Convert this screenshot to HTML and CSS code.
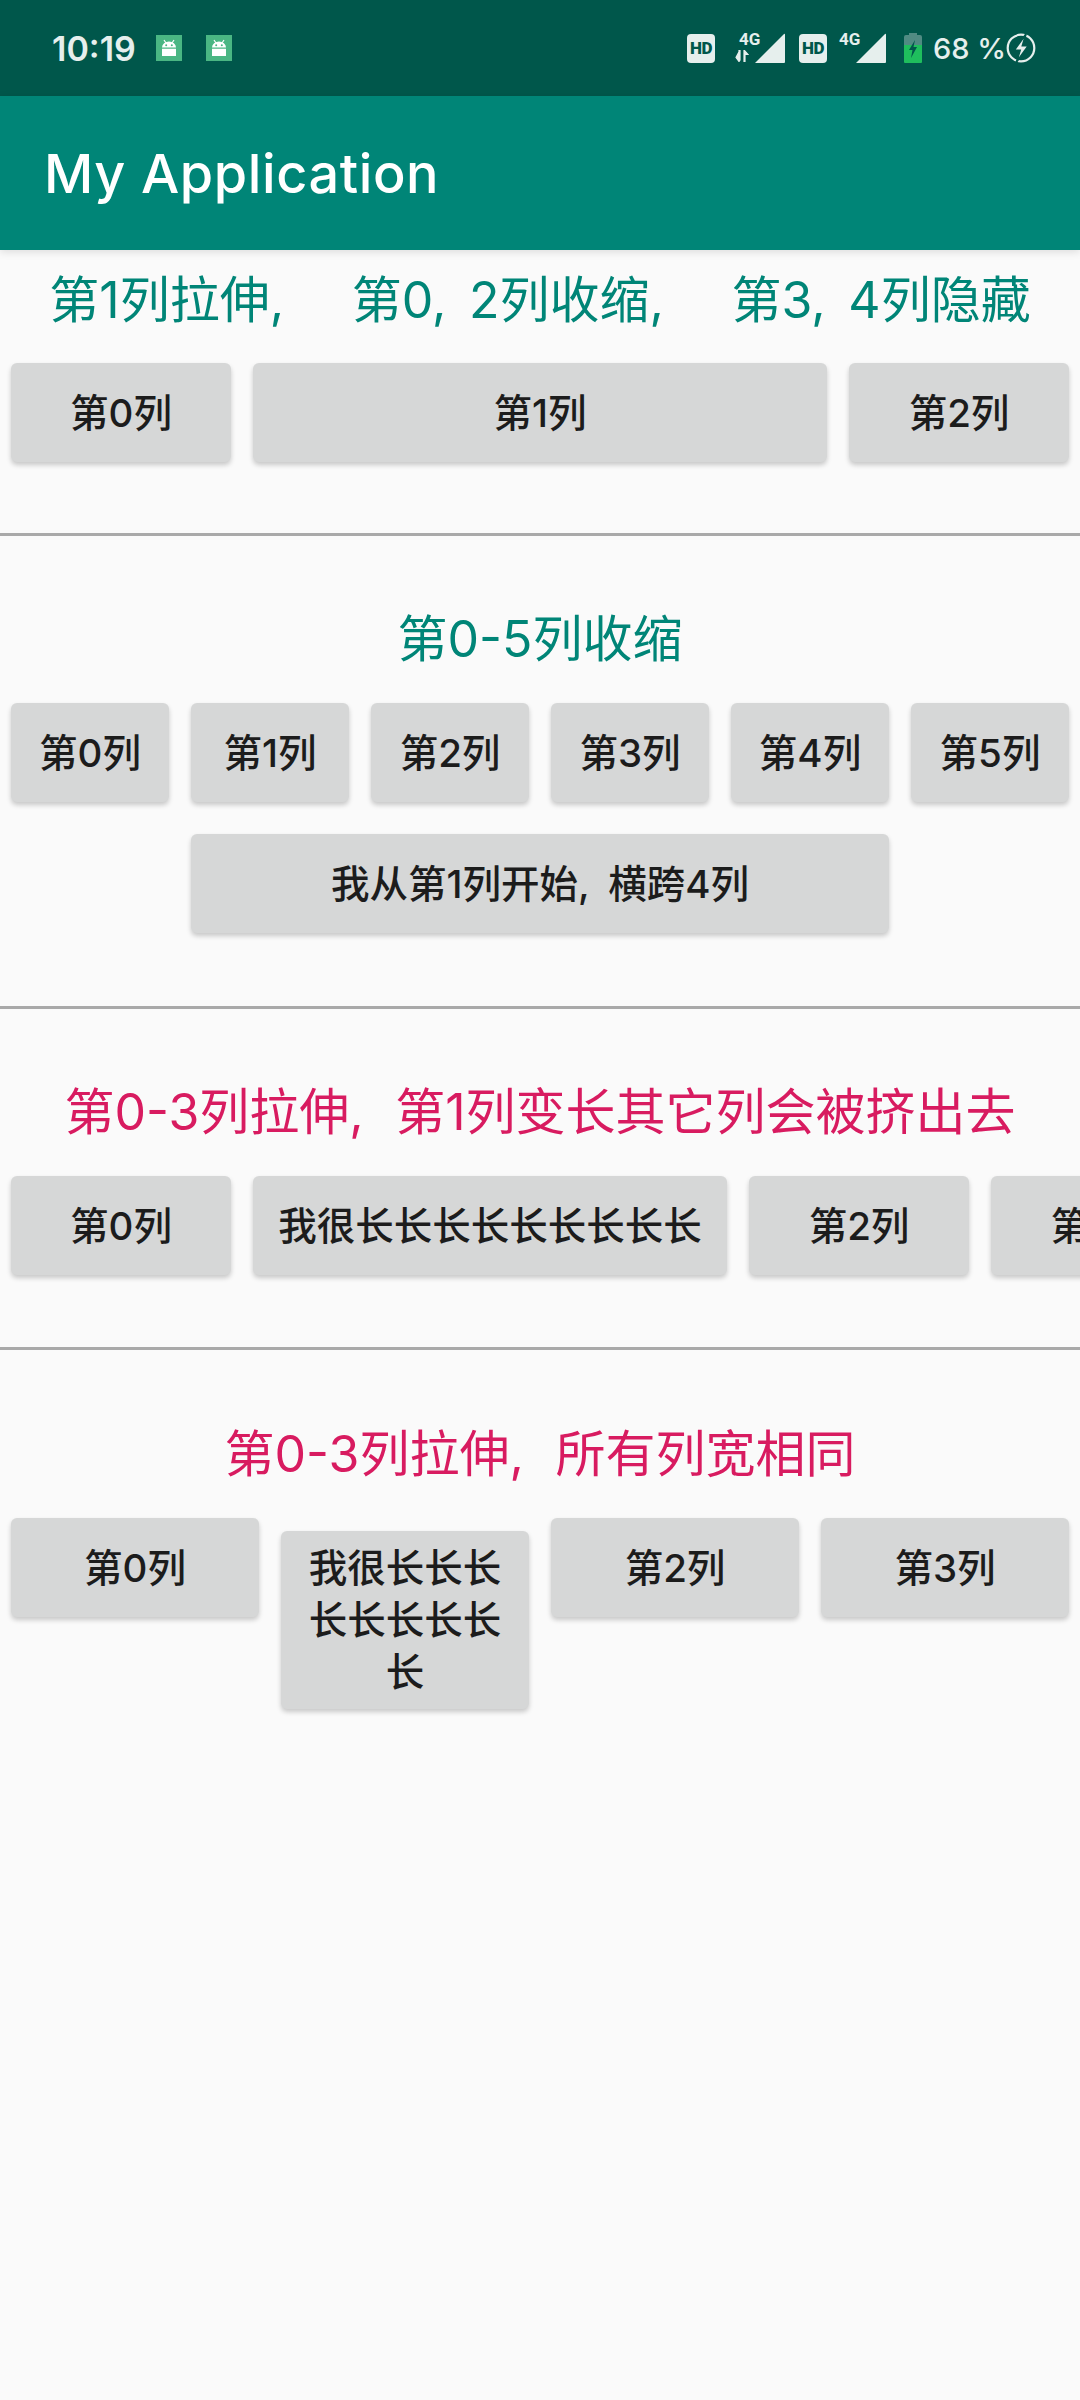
FILE: index.html
```html
<!DOCTYPE html>
<html lang="zh">
<head>
<meta charset="utf-8">
<title>My Application</title>
<link rel="stylesheet" href="styles.css">
</head>
<body>
<div class="screen">
  <header class="status-bar">
    <div class="status-left">
      <span class="time">10:19</span>
      <svg class="notif" viewBox="0 0 26 26"><rect width="26" height="26" fill="#4ab683"/><path d="M6 12.500a7 6 0 0 1 14 0z M6 13.800h14v7.200H6z" fill="#fff"/><path d="M8 5l2 3M18 5l-2 3" stroke="#fff" stroke-width="1.200"/><circle cx="10.200" cy="10.300" r="1" fill="#4ab683"/><circle cx="15.800" cy="10.300" r="1" fill="#4ab683"/></svg>
      <svg class="notif" viewBox="0 0 26 26"><rect width="26" height="26" fill="#4ab683"/><path d="M6 12.500a7 6 0 0 1 14 0z M6 13.800h14v7.200H6z" fill="#fff"/><path d="M8 5l2 3M18 5l-2 3" stroke="#fff" stroke-width="1.200"/><circle cx="10.200" cy="10.300" r="1" fill="#4ab683"/><circle cx="15.800" cy="10.300" r="1" fill="#4ab683"/></svg>
    </div>
    <div class="status-right">
      <span class="hd">HD</span>
      <span class="net net-arrows">
        <span class="net-label">4G</span>
        <svg class="arrows" viewBox="0 0 14 12"><path d="M4 0v8M1 7.500l3 4 1-1.500V0zM9 12V4M9 0l4 4.500H10V12H9z" stroke="#e6efed" stroke-width="1.200" fill="#e6efed"/></svg>
        <svg class="signal" viewBox="0 0 31 30"><path d="M1 30L30 1q1-1 1 1v27q0 1-1 1z" fill="#e6efed"/></svg>
      </span>
      <span class="hd">HD</span>
      <span class="net net-plain">
        <span class="net-label">4G</span>
        <svg class="signal" viewBox="0 0 31 30"><path d="M1 30L30 1q1-1 1 1v27q0 1-1 1z" fill="#e6efed"/></svg>
      </span>
      <svg class="battery" viewBox="0 0 18 30"><path d="M5 0h8v2h3q2 0 2 2v8H0V4q0-2 2-2h3z" fill="#e6efed" opacity=".35"/><path d="M0 12h18v17q0 1-1 1H1q-1 0-1-1z" fill="#1fbe5d"/><path d="M11 7L5 17h3.500L7 25l6-11H9.500z" fill="#00574b"/></svg>
      <span class="percent">68 %</span>
      <svg class="charge" viewBox="0 0 30 30"><circle cx="15" cy="15" r="13.300" fill="none" stroke="#e6efed" stroke-width="2.200"/><path d="M20 1L8 17.500H14L10.500 29 22.500 12.500H16.500z" fill="#e6efed" stroke="#00574b" stroke-width="1.800"/></svg>
    </div>
  </header>
  <div class="app-bar"><h1 class="app-title">My Application</h1></div>
  <main class="content">
    <section class="block first">
      <h2 class="heading heading-tight teal">第1列拉伸,   第0, 2列收缩,   第3, 4列隐藏</h2>
      <div class="table cols-stretch">
        <div class="btn">第0列</div>
        <div class="btn">第1列</div>
        <div class="btn">第2列</div>
      </div>
    </section>
    <section class="block second">
      <h2 class="heading teal">第0-5列收缩</h2>
      <div class="table cols-six">
        <div class="btn">第0列</div>
        <div class="btn">第1列</div>
        <div class="btn">第2列</div>
        <div class="btn">第3列</div>
        <div class="btn">第4列</div>
        <div class="btn">第5列</div>
        <div class="btn span-four">我从第1列开始, 横跨4列</div>
      </div>
    </section>
    <section class="block third">
      <h2 class="heading pink">第0-3列拉伸, 第1列变长其它列会被挤出去</h2>
      <div class="table cols-overflow">
        <div class="btn">第0列</div>
        <div class="btn">我很长长长长长长长长长</div>
        <div class="btn">第2列</div>
        <div class="btn">第3列</div>
      </div>
    </section>
    <section class="block fourth">
      <h2 class="heading pink">第0-3列拉伸, 所有列宽相同</h2>
      <div class="table cols-equal">
        <div class="btn">第0列</div>
        <div class="btn">我很长长长长长长长长长</div>
        <div class="btn">第2列</div>
        <div class="btn">第3列</div>
      </div>
    </section>
  </main>
</div>
</body>
</html>
```
FILE: styles.css
```css
* { box-sizing: border-box; }
html, body { margin: 0; padding: 0; }
body { background: #fafafa; font-family: "Inter", "Noto Sans CJK SC", sans-serif; }
.screen { width: 1080px; height: 2400px; overflow: hidden; background: #fafafa; display: flex; flex-direction: column; }

.status-bar { height: 96px; background: #00574b; display: flex; justify-content: space-between; align-items: center; padding: 0 44px 0 52px; color: #e6efed; flex: none; }
.status-left, .status-right { display: flex; align-items: center; }
.time { font-family: "Inter", sans-serif; font-size: 34px; font-weight: 600; width: 104px; }
.notif { width: 26px; height: 26px; margin-right: 24px; }
.status-right { height: 30px; }
.hd { width: 28px; height: 29px; background: #e6efed; color: #00574b; border-radius: 4px; font-family: "Roboto", sans-serif; font-size: 17px; font-weight: 900; line-height: 29px; text-align: center; margin-right: 20px; letter-spacing: -.5px; }
.net { position: relative; height: 30px; display: block; }
.net-arrows { width: 50px; margin-right: 14px; }
.net-plain { width: 47px; margin-right: 18px; margin-left: -8px; }
.net-label { position: absolute; top: -3px; left: 4px; font-family: "Roboto", sans-serif; font-size: 17px; font-weight: 700; line-height: 18px; }
.net-plain .net-label { left: 0; }
.arrows { position: absolute; left: 0; bottom: 1px; width: 14px; height: 12px; }
.signal { position: absolute; right: 0; bottom: 0; width: 31px; height: 30px; }
.battery { width: 18px; height: 30px; margin-right: 11px; }
.percent { font-family: "Inter", sans-serif; font-size: 29px; font-weight: 500; width: 73px; white-space: nowrap; }
.charge { width: 30px; height: 30px; }

.app-bar { height: 154px; background: #008577; display: flex; align-items: center; padding-left: 44px; box-shadow: 0 2px 8px rgba(0,0,0,.12); flex: none; position: relative; }
.app-title { margin: 0; font-family: "Inter", sans-serif; font-size: 54px; font-weight: 500; letter-spacing: .6px; color: #fff; }

.content { flex: 1; }
.block { border-bottom: 3px solid #a9a9a9; }
.block.first { padding: 17px 0 71px; }
.block.second { padding: 70px 0 73px; }
.block.third { padding: 70px 0 72px; }
.block.fourth { padding: 71px 0 0; border-bottom: 0; }
.heading { margin: 0 0 31px; font-size: 50px; line-height: 66px; font-weight: 400; word-spacing: .35em; text-align: center; white-space: pre; }
.block.first .heading { margin-bottom: 30px; }
.heading-tight { word-spacing: .17em; }
.teal { color: #008577; }
.pink { color: #d81b60; }

.table { display: grid; column-gap: 22px; row-gap: 32px; padding: 0 11px; align-items: baseline; }
.cols-stretch { grid-template-columns: 220px 1fr 220px; }
.cols-six { grid-template-columns: repeat(6, 1fr); }
.cols-overflow { grid-template-columns: 220px 474px 220px 220px; }
.cols-equal { grid-template-columns: repeat(4, 1fr); }
.span-four { grid-column: 2 / span 4; }
.btn { display: flex; align-items: center; justify-content: center; min-height: 99px; padding: 11px 22px; background: #d6d7d7; color: #1c1c1c; border-radius: 6px; box-shadow: 0 3px 5px rgba(0,0,0,.2); font-size: 38.5px; line-height: 52px; font-weight: 500; word-spacing: .23em; text-align: center; }
```
